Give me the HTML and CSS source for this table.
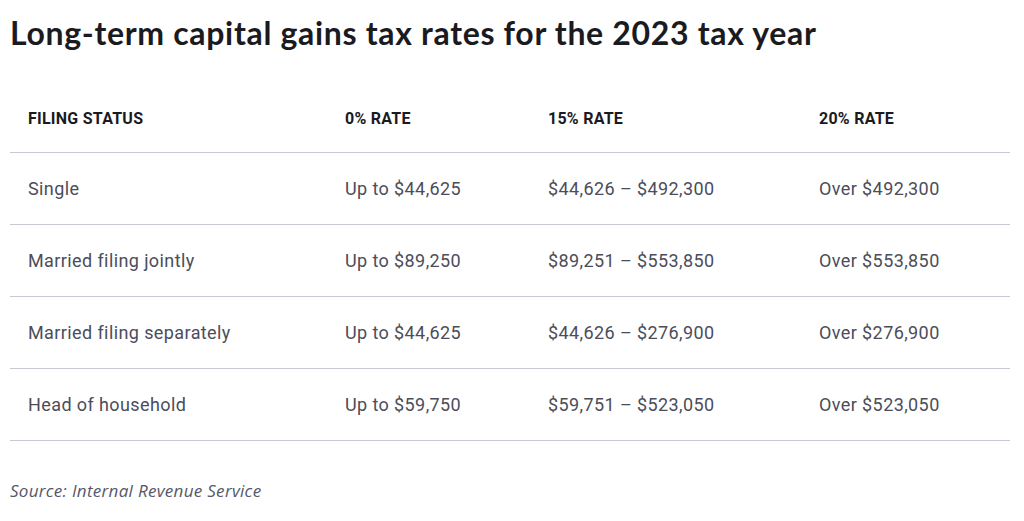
FILE: index.html
```html
<!DOCTYPE html>
<html>
<head>
<meta charset="utf-8">
<link rel="stylesheet" href="styles.css">
</head>
<body>
<div class="page">
  <h1 class="title">Long-term capital gains tax rates for the 2023 tax year</h1>
  <table class="rates">
    <colgroup>
      <col class="c1"><col class="c2"><col class="c3"><col class="c4">
    </colgroup>
    <thead>
      <tr><th>Filing status</th><th>0% rate</th><th>15% rate</th><th>20% rate</th></tr>
    </thead>
    <tbody>
      <tr><td>Single</td><td>Up to $44,625</td><td>$44,626 – $492,300</td><td>Over $492,300</td></tr>
      <tr><td>Married filing jointly</td><td>Up to $89,250</td><td>$89,251 – $553,850</td><td>Over $553,850</td></tr>
      <tr><td>Married filing separately</td><td>Up to $44,625</td><td>$44,626 – $276,900</td><td>Over $276,900</td></tr>
      <tr><td>Head of household</td><td>Up to $59,750</td><td>$59,751 – $523,050</td><td>Over $523,050</td></tr>
    </tbody>
  </table>
  <p class="source">Source: Internal Revenue Service</p>
</div>
</body>
</html>
```

FILE: styles.css
```css
html, body { margin: 0; padding: 0; background: #fff; }
.page { padding: 0 14px 0 10px; }
.title {
  font-family: Lato, "Liberation Sans", sans-serif;
  font-weight: 700;
  font-size: 32px;
  line-height: 38px;
  color: #1a1a1f;
  margin: 0;
  padding-top: 14px;
  letter-spacing: 0.68px;
}
.rates {
  width: 1000px;
  border-collapse: collapse;
  margin-top: 32px;
  font-family: Roboto, "Liberation Sans", sans-serif;
}
.c1 { width: 317px; }
.c2 { width: 203px; }
.c3 { width: 271px; }
.c4 { width: 209px; }
.rates th {
  text-align: left;
  text-transform: uppercase;
  font-weight: 700;
  font-size: 16px;
  letter-spacing: 0.25px;
  color: #1a1a1f;
  height: 68px;
  padding: 0 0 0 18px;
  border-bottom: 1px solid #c8c8d6;
  vertical-align: middle;
}
.rates td {
  font-size: 18px;
  letter-spacing: 0.4px;
  color: #4b4d5a;
  height: 71px;
  padding: 0 0 0 18px;
  border-bottom: 1px solid #c8c8d6;
  vertical-align: middle;
}
.source {
  font-family: "Open Sans", "Liberation Sans", sans-serif;
  font-style: italic;
  font-size: 17px;
  letter-spacing: 0.3px;
  color: #55576a;
  margin: 38px 0 0 0;
}
```
